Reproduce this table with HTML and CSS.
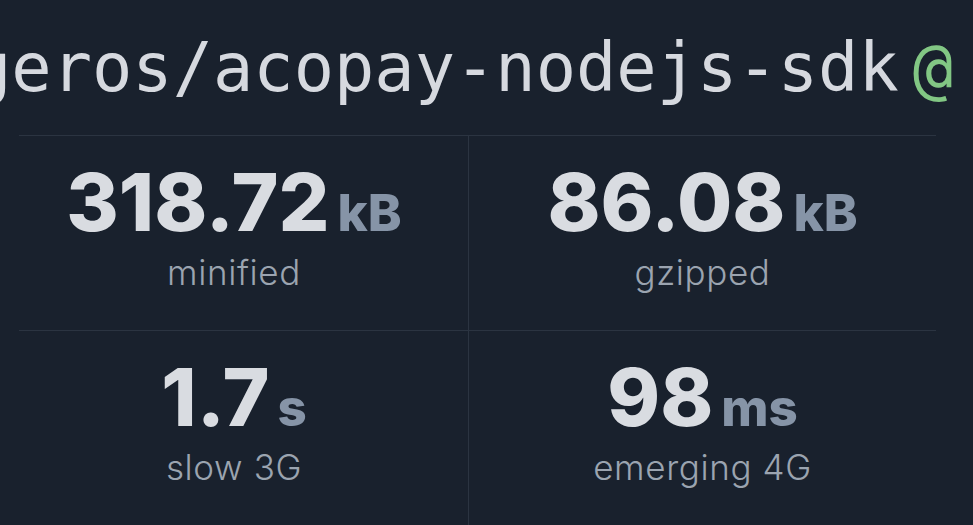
FILE: index.html
```html
<!DOCTYPE html>
<html lang="en">
<head>
  <meta charset="UTF-8">
  <meta name="viewport" content="width=device-width, initial-scale=1.0">
  <link rel="stylesheet" href="styles.css">
</head>
<body>
  <div class="container">

    <h1 class="package-title">
      <span class="package-name">@rodogeros/acopay-nodejs-sdk</span>
      <span class="separator">@</span>
      <span class="version">1.0.4</span>
    </h1>

    <div class="stats">
      <div class="stat">
        <div class="stat-value">318.72<span class="stat-unit">kB</span></div>
        <div class="stat-label">minified</div>
      </div>
      <div class="stat">
        <div class="stat-value">86.08<span class="stat-unit">kB</span></div>
        <div class="stat-label">gzipped</div>
      </div>
      <div class="stat">
        <div class="stat-value">1.7<span class="stat-unit">s</span></div>
        <div class="stat-label">slow 3G</div>
      </div>
      <div class="stat">
        <div class="stat-value">98<span class="stat-unit">ms</span></div>
        <div class="stat-label">emerging 4G</div>
      </div>
    </div>

  </div>
</body>
</html>
```

FILE: styles.css
```css
:root {
  --bg-color: #19212d;
  --line-color: #2b3441;
  --title-color: #d6d9df;
  --value-color: #d9dce1;
  --unit-color: #8694a7;
  --label-color: #9ba4b0;
  --accent-color: #82c784;
}

body {
  font-family: Inter, 'Noto Sans', sans-serif;
  background-color: var(--bg-color);
  color: var(--value-color);
  margin: 0;
  padding: 0;
  overflow: hidden;
}

.container {
  width: 936px;
}

.package-title {
  display: flex;
  justify-content: center;
  align-items: baseline;
  white-space: nowrap;
  margin: 0 0 27px;
  padding-top: 28px;
  font-family: 'DejaVu Sans Mono', monospace;
  font-size: 67px;
  font-weight: normal;
  line-height: 80px;
  color: var(--title-color);
}

.separator {
  color: var(--accent-color);
  margin: 0 12px 0 14px;
}

.stats {
  display: grid;
  grid-template-columns: 449px 468px;
  margin-left: 19px;
}

.stat {
  display: flex;
  flex-direction: column;
  align-items: center;
  gap: 9px;
  padding: 26px 0 37px;
  border-top: 1px solid var(--line-color);
}

.stat:nth-child(odd) {
  padding-right: 19px;
}

.stat:nth-child(even) {
  border-left: 1px solid var(--line-color);
}

.stat-value {
  font-size: 80px;
  font-weight: 800;
  line-height: 80px;
}

.stat-unit {
  font-size: 51px;
  line-height: 1;
  margin-left: 8px;
  color: var(--unit-color);
}

.stat-label {
  font-size: 35px;
  font-weight: 300;
  line-height: 1.2;
  letter-spacing: 0.6px;
  color: var(--label-color);
}
```
